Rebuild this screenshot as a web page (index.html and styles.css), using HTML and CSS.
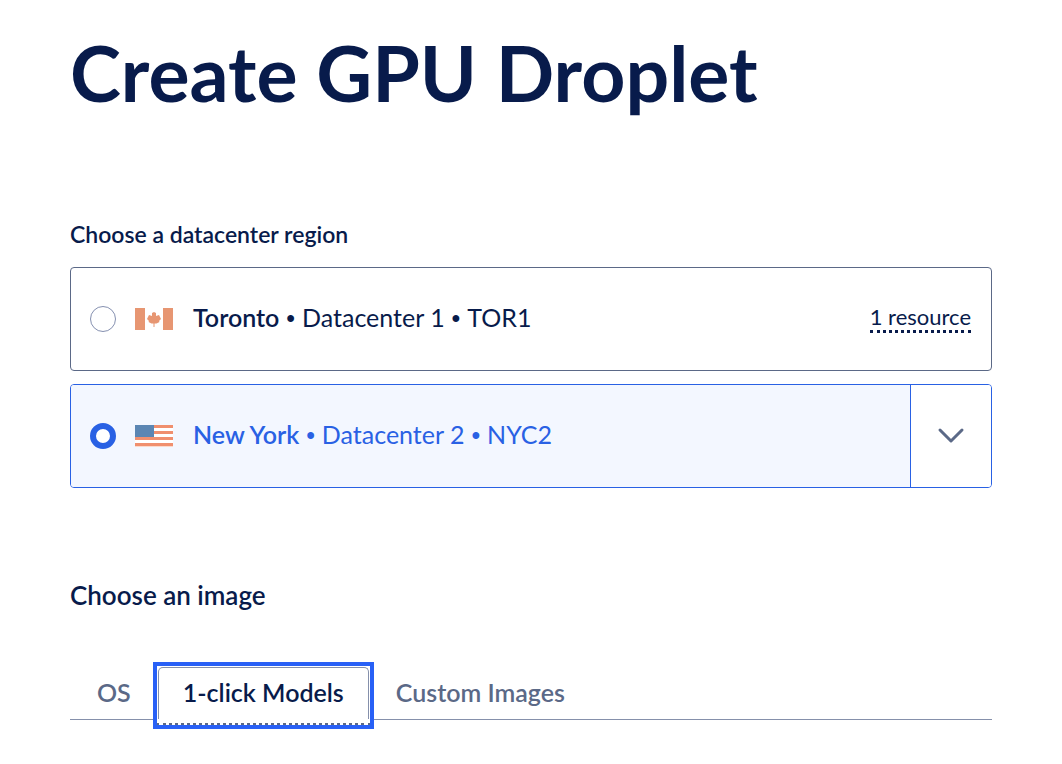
FILE: index.html
```html
<!DOCTYPE html>
<html lang="en">
<head>
    <meta charset="UTF-8">
    <meta name="viewport" content="width=device-width, initial-scale=1.0">
    <title>Create GPU Droplet</title>
    <link rel="stylesheet" href="styles.css">
</head>
<body>
    <main class="page">
        <h1>Create GPU Droplet</h1>

        <fieldset class="regions">
            <legend>Choose a datacenter region</legend>

            <div class="region">
                <label class="region-choice">
                    <input type="radio" name="region" value="tor1">
                    <svg class="flag" viewBox="0 0 38 22" aria-hidden="true">
                        <rect width="38" height="22" fill="#fff"/>
                        <path fill="#e79672" d="M0 0h10v22H0zM28 0h10v22H28z"/>
                        <path fill="#e79672" d="M19 4l2 1v3l3-1 1 2 1 2-2 2 .5 1-3 1.500h-2V19h-1v-3.500h-2l-3-1.500.5-1-2-2 1-2 1-2 3 1V5z"/>
                    </svg>
                    <span class="region-name"><strong>Toronto</strong><span class="dot"> • </span>Datacenter 1<span class="dot"> • </span>TOR1</span>
                </label>
                <a class="resources" href="#resources">1 resource</a>
            </div>

            <div class="region selected">
                <label class="region-choice">
                    <input type="radio" name="region" value="nyc2" checked>
                    <svg class="flag" viewBox="0 0 38 22" aria-hidden="true">
                        <rect width="38" height="22" fill="#fff"/>
                        <path fill="#f08f6e" d="M0 0h38v3H0zM0 6h38v3H0zM0 12h38v3H0zM0 18h38v3H0z"/>
                        <path fill="#fbd9cc" d="M0 21h38v1H0z"/>
                        <rect width="19" height="12" fill="#5b86b3"/>
                    </svg>
                    <span class="region-name"><strong>New York</strong><span class="dot"> • </span>Datacenter 2<span class="dot"> • </span>NYC2</span>
                </label>
                <button class="expand" type="button" aria-label="More datacenters">
                    <svg viewBox="0 0 26 14" aria-hidden="true">
                        <path d="M2 2l11 11L24 2"/>
                    </svg>
                </button>
            </div>
        </fieldset>

        <section class="images">
            <h2>Choose an image</h2>
            <div class="tabs" role="tablist">
                <button class="tab" type="button" role="tab"><span>OS</span></button>
                <button class="tab active" type="button" role="tab" aria-selected="true"><span>1-click Models</span></button>
                <button class="tab" type="button" role="tab"><span>Custom Images</span></button>
            </div>
        </section>
    </main>
</body>
</html>
```
FILE: styles.css
```css
* { box-sizing: border-box; }
body { margin: 0; background: #fff; color: #081b4b; font-family: Lato, "Open Sans", sans-serif; }
.page { padding: 26px 70px; }
h1 { margin: 0; font-size: 77px; line-height: 92px; font-weight: 700; }

.regions { margin: 101px 0 0; padding: 0; border: 0; min-width: 0; }
legend { padding: 0; margin-bottom: 18px; font-size: 23px; line-height: 30px; font-weight: 600; }
.region { display: flex; align-items: stretch; height: 104px; border: 1px solid #5b6987; border-radius: 4px; overflow: hidden; }
.region + .region { margin-top: 13px; }
.region-choice { flex: 1; display: flex; align-items: center; padding: 0 19px; cursor: pointer; }
.region-choice input { appearance: none; width: 26px; height: 26px; margin: 0; border: 1px solid #8590b0; border-radius: 50%; background: #fff; }
.region-choice input:checked { border: 6px solid #2961e4; }
.flag { width: 38px; height: 22px; margin: 0 20px 0 19px; }
.region-name { padding-bottom: 4px; font-size: 25px; line-height: 32px; }
.region-name strong { font-weight: 600; }
.dot { font-family: "Liberation Sans", sans-serif; }
.resources { align-self: center; margin-right: 20px; padding-bottom: 1px; border-bottom: 3px dotted #081b4b; color: #081b4b; font-size: 22px; line-height: 24px; text-decoration: none; }
.selected { border-color: #2961e4; color: #2961e4; }
.selected .region-choice { background: #f3f7ff; }
.expand { width: 81px; padding: 0; border: 0; border-left: 1px solid #2961e4; background: #fff; cursor: pointer; }
.expand svg { width: 26px; height: 14px; fill: none; stroke: #5b6987; stroke-width: 3; stroke-linecap: round; stroke-linejoin: round; overflow: visible; }

.images { margin-top: 90px; }
h2 { margin: 0; font-size: 26px; line-height: 34px; font-weight: 600; }
.tabs { display: flex; margin-top: 53px; border-bottom: 1px solid #8590ab; }
.tab { padding: 2px 2px 0; border: 0; background: none; color: #5b6987; font: 600 25px/32px Lato, "Open Sans", sans-serif; cursor: pointer; }
.tab span { display: block; height: 52px; padding: 8px 24px; border: 1px solid transparent; border-bottom: 0; border-radius: 5px 5px 0 0; }
.tab:first-child span { padding-right: 22px; }
.tab:last-child span { padding-left: 22px; }
.tab.active { z-index: 1; margin-bottom: -7px; padding-bottom: 4px; border-bottom: 3px dotted #5b6987; outline: 4px solid #2860f6; outline-offset: -1px; background: #fff; color: #081b4b; }
.tab.active span { border-color: #8590ab; }
```
